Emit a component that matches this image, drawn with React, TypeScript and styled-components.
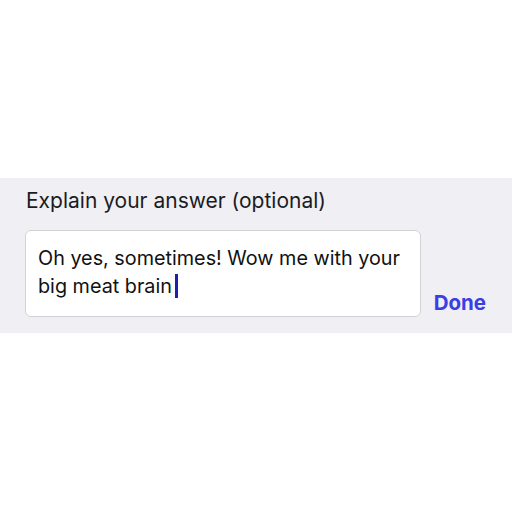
import React from "react";
import styled, { createGlobalStyle } from "styled-components";

const Global = createGlobalStyle`
  html, body { margin: 0; padding: 0; background: #ffffff; }
  body { width: 512px; height: 512px; font-family: "Inter", "Liberation Sans", sans-serif; }
`;

const Page = styled.div`
  width: 512px;
  height: 512px;
  display: flex;
  flex-direction: column;
  padding-top: 178px;
  box-sizing: border-box;
`;

const Panel = styled.div`
  background: #efeff4;
  height: 155px;
  box-sizing: border-box;
  padding: 10px 26px 0 25px;
  display: flex;
  flex-direction: column;
`;

const Label = styled.div`
  font-size: 21px;
  color: #1c1c1e;
  line-height: 26px;
  padding-left: 1px;
`;

const Row = styled.div`
  margin-top: 16px;
  display: flex;
  align-items: flex-end;
  gap: 13px;
`;

const Field = styled.div`
  width: 396px;
  height: 87px;
  box-sizing: border-box;
  background: #ffffff;
  border: 1px solid #d2d2d6;
  border-radius: 6px;
  padding: 13px 12px 0 12px;
  font-size: 19.8px;
  line-height: 28px;
  color: #111111;
`;

const Caret = styled.span`
  display: inline-block;
  width: 3px;
  height: 24px;
  background: #1e1eb0;
  vertical-align: -5px;
  margin-left: 3px;
`;

const Done = styled.div`
  font-size: 20.5px;
  font-weight: 700;
  color: #3a3ee6;
  margin-bottom: 2px;
`;

export default function App() {
  return (
    <Page>
      <Global />
      <Panel>
        <Label>Explain your answer (optional)</Label>
        <Row>
          <Field>
            Oh yes, sometimes! Wow me with your big meat brain
            <Caret />
          </Field>
          <Done>Done</Done>
        </Row>
      </Panel>
    </Page>
  );
}
